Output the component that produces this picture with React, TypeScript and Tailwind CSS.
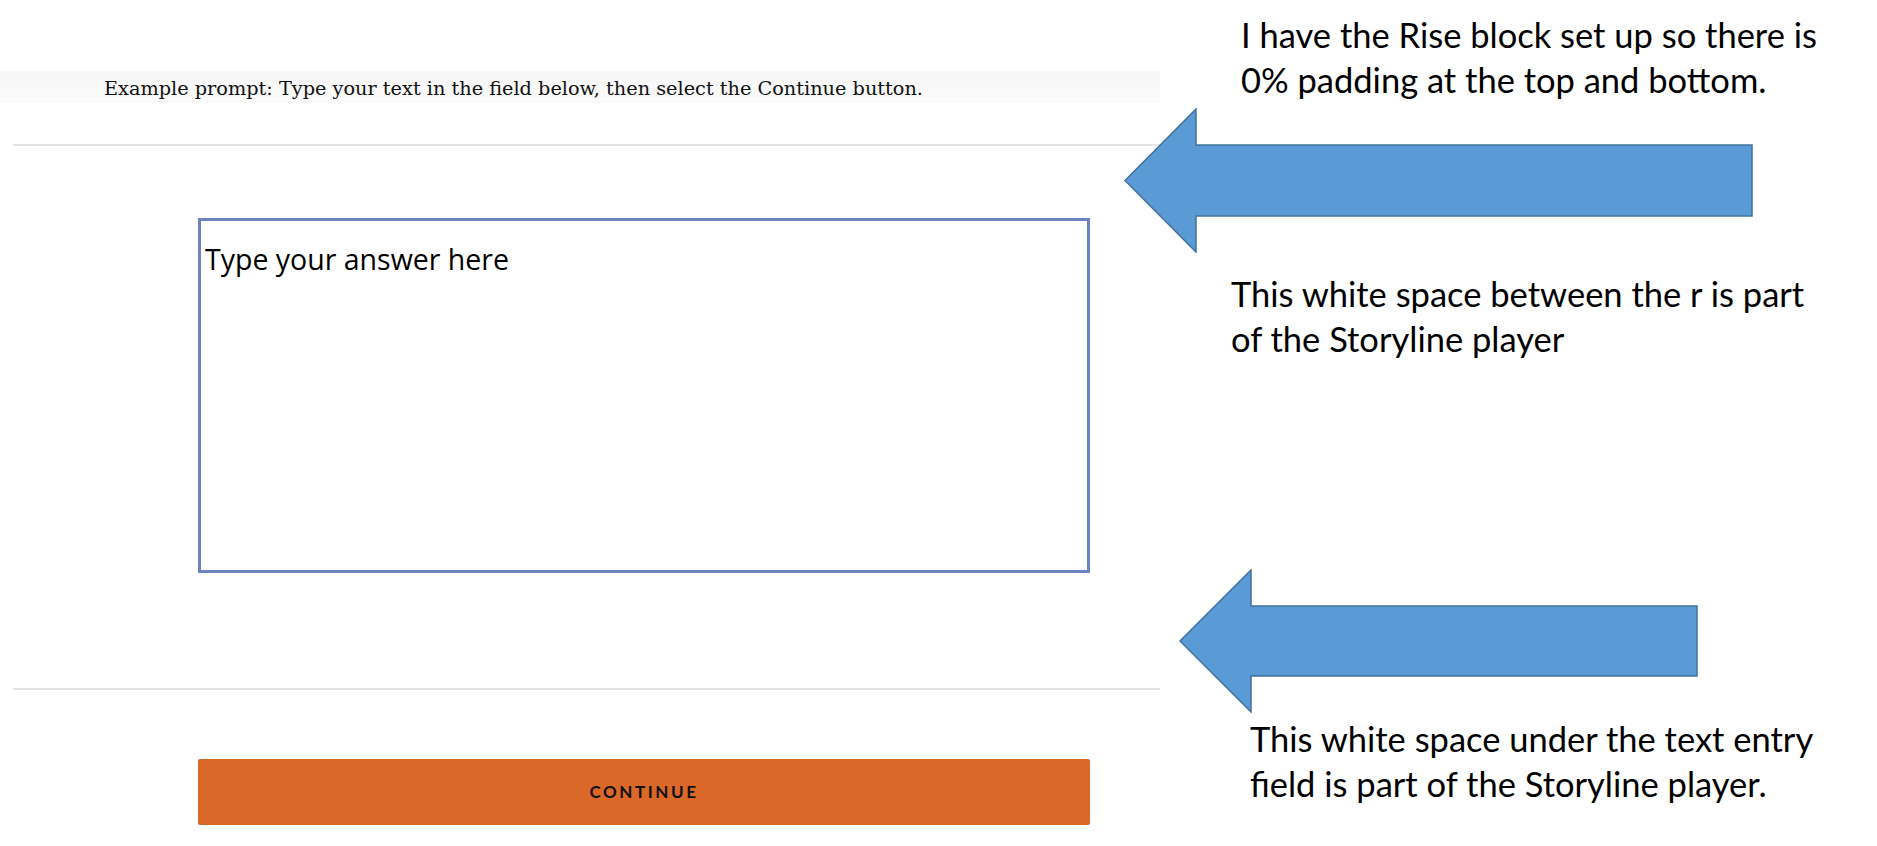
const annotation = "font-['Lato','Open_Sans',sans-serif] text-[34.5px] leading-[45px] text-black whitespace-nowrap"

const LeftArrow = ({ w, h, shaftTop, shaftBottom, head }: { w: number; h: number; shaftTop: number; shaftBottom: number; head: number }) => {
  const mid = h / 2
  const points = `0,${mid} ${head},0 ${head},${shaftTop} ${w},${shaftTop} ${w},${shaftBottom} ${head},${shaftBottom} ${head},${h}`
  return (
    <svg width={w + 2} height={h + 2} viewBox={`-1 -1 ${w + 2} ${h + 2}`} className="block">
      <polygon points={points} fill="#5b9bd5" stroke="#41719c" strokeWidth="1.5" strokeLinejoin="miter" />
    </svg>
  )
}

const RiseBlock = () => {
  return (
    <div className="w-[1160px] shrink-0 flex flex-col pt-[71px]">
      <div className="h-[32px] bg-gradient-to-b from-[#f6f6f6] to-[#fbfbfb] pl-[104px] pt-[8px]">
        <p className="font-['DejaVu_Serif',serif] text-[19.3px] leading-[20px] text-[#111] whitespace-nowrap">
          Example prompt: Type your text in the field below, then select the Continue button.
        </p>
      </div>
      <div className="mt-[41px] ml-[13px] h-[2px] bg-[#e6e6e6]"></div>
      <div className="mt-[72px] ml-[198px] w-[892px] h-[355px] border-[3px] border-[#6c83c4] pl-[4px] pt-[17px]">
        <p className="font-['Open_Sans',sans-serif] text-[28.5px] text-black">Type your answer here</p>
      </div>
      <div className="mt-[115px] ml-[13px] h-[2px] bg-[#e6e6e6]"></div>
      <button className="mt-[69px] ml-[198px] w-[892px] h-[66px] bg-[#da6829] rounded-[2px] flex items-center justify-center">
        <span className="font-['Lato',sans-serif] font-bold text-[17px] tracking-[0.15em] text-[#111]">CONTINUE</span>
      </button>
    </div>
  )
}

const App = () => {
  return (
    <main className="w-[1877px] h-[846px] bg-white flex overflow-hidden">
      <RiseBlock />
      <section className="flex-1 flex flex-col">
        <p className={`${annotation} mt-[12px] pl-[81px]`}>
          I have the Rise block set up so there is
          <br />
          0% padding at the top and bottom.
        </p>
        <div className="mt-[6px] -ml-[36px]">
          <LeftArrow w={627} h={143} shaftTop={36} shaftBottom={107} head={71} />
        </div>
        <p className={`${annotation} mt-[18px] pl-[71px]`}>
          This white space between the r is part
          <br />
          of the Storyline player
        </p>
        <div className="mt-[208px] ml-[19px]">
          <LeftArrow w={517} h={142} shaftTop={36} shaftBottom={106} head={71} />
        </div>
        <p className={`${annotation} mt-[3px] pl-[90px]`}>
          This white space under the text entry
          <br />
          field is part of the Storyline player.
        </p>
      </section>
    </main>
  )
}

export default App
